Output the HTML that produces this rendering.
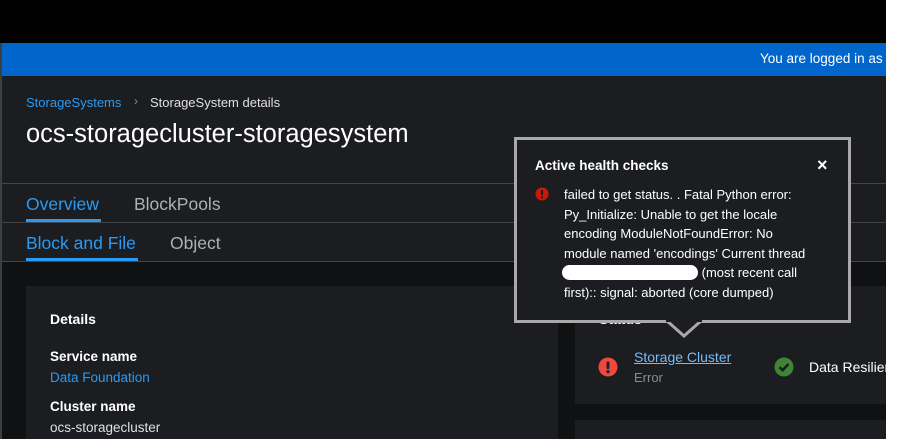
<!DOCTYPE html>
<html><head><meta charset="utf-8"><style>
*{margin:0;padding:0;box-sizing:border-box}
body{width:910px;height:446px;background:#fff;position:relative;overflow:hidden;font-family:"Liberation Sans",sans-serif}
.abs{position:absolute}
</style></head><body>
<div class="abs" style="left:0;top:0;width:886px;height:43px;background:#000"></div>
<div class="abs" style="left:0;top:43px;width:886px;height:33px;background:#0066cc"></div>
<div class="abs" style="left:760px;top:51px;color:#fff;font-size:13.5px;white-space:nowrap">You are logged in as</div>
<div class="abs" style="left:0;top:76px;width:886px;height:186px;background:#1b1d21"></div>
<div class="abs" style="left:0;top:262px;width:886px;height:177px;background:#0f1113"></div>
<div class="abs" style="left:0;top:43px;width:2px;height:396px;background:#3c3f42"></div>
<div class="abs" style="left:26px;top:95px;font-size:13px;color:#2b9af3">StorageSystems</div>
<div class="abs" style="left:134px;top:94px;font-size:12px;color:#8a8d90">›</div>
<div class="abs" style="left:150px;top:95px;font-size:13px;color:#e0e0e0">StorageSystem details</div>
<div class="abs" style="left:26px;top:120px;font-size:25.5px;color:#fff">ocs-storagecluster-storagesystem</div>
<div class="abs" style="left:2px;top:183px;width:884px;height:1px;background:#444548"></div>
<div class="abs" style="left:26px;top:194px;font-size:17.5px;color:#2b9af3">Overview</div>
<div class="abs" style="left:26px;top:219px;width:75px;height:3px;background:#2b9af3"></div>
<div class="abs" style="left:134px;top:194px;font-size:17.5px;color:#aeb0b2">BlockPools</div>
<div class="abs" style="left:2px;top:222px;width:884px;height:1px;background:#444548"></div>
<div class="abs" style="left:26px;top:233px;font-size:17.5px;color:#2b9af3">Block and File</div>
<div class="abs" style="left:26px;top:258px;width:112px;height:3px;background:#2b9af3"></div>
<div class="abs" style="left:170px;top:233px;font-size:17.5px;color:#aeb0b2">Object</div>
<div class="abs" style="left:2px;top:261px;width:884px;height:1px;background:#444548"></div>
<div class="abs" style="left:26px;top:286px;width:532px;height:153px;background:#1b1d21"></div>
<div class="abs" style="left:50px;top:311px;font-size:14px;font-weight:bold;color:#fff">Details</div>
<div class="abs" style="left:50px;top:349px;font-size:13.5px;font-weight:bold;color:#fff">Service name</div>
<div class="abs" style="left:50px;top:370px;font-size:13.5px;color:#2b9af3">Data Foundation</div>
<div class="abs" style="left:50px;top:399px;font-size:13.5px;font-weight:bold;color:#fff">Cluster name</div>
<div class="abs" style="left:50px;top:420px;font-size:13.5px;color:#e0e0e0">ocs-storagecluster</div>
<div class="abs" style="left:575px;top:286px;width:311px;height:118px;background:#1b1d21"></div>
<div class="abs" style="left:575px;top:420px;width:311px;height:19px;background:#1b1d21"></div>
<div class="abs" style="left:599px;top:311px;font-size:14px;font-weight:bold;color:#fff">Status</div>
<svg class="abs" style="left:598px;top:357px" width="20" height="20"><circle cx="10" cy="10" r="9.5" fill="#f0483e"/><rect x="8.6" y="4.5" width="2.8" height="7.5" rx="1" fill="#1b1d21"/><circle cx="10" cy="14.6" r="1.6" fill="#1b1d21"/></svg>
<div class="abs" style="left:634px;top:349px;font-size:14px;color:#73bcf7;text-decoration:underline">Storage Cluster</div>
<div class="abs" style="left:634px;top:370px;font-size:13px;color:#8a8d90">Error</div>
<svg class="abs" style="left:774px;top:357px" width="20" height="20"><circle cx="10" cy="10" r="9.5" fill="#3e8635"/><path d="M5.5 10.2 L8.6 13.2 L14.5 7" stroke="#1b1d21" stroke-width="2.6" fill="none"/></svg>
<div class="abs" style="left:809px;top:359px;font-size:14px;color:#fff;white-space:nowrap;width:77px;overflow:hidden">Data Resilien</div>
<div class="abs" style="left:886px;top:0;width:24px;height:446px;background:#fff"></div>
<div class="abs" style="left:0;top:439px;width:910px;height:7px;background:#fff"></div>
<!-- popover -->
<div class="abs" style="left:514px;top:137px;width:337px;height:186px;background:#1b1d21;border:3px solid #a9a9a9"></div>
<svg class="abs" style="left:666px;top:320px" width="36" height="18"><path d="M0 0 L18 16 L36 0" fill="#1b1d21" stroke="#a9a9a9" stroke-width="3"/><rect x="0" y="0" width="36" height="2" fill="#1b1d21"/></svg>
<div class="abs" style="left:535px;top:158px;font-size:13.5px;font-weight:bold;color:#fff">Active health checks</div>
<div class="abs" style="left:817px;top:155px;font-size:18px;font-weight:bold;color:#fff">×</div>
<svg class="abs" style="left:535px;top:187px" width="14" height="14"><circle cx="7" cy="7" r="6.5" fill="#c9190b"/><rect x="6" y="3" width="2" height="5" fill="#1b1d21"/><circle cx="7" cy="10.3" r="1.1" fill="#1b1d21"/></svg>
<div class="abs" style="left:564px;top:185px;width:280px;font-size:13px;line-height:19.5px;color:#fff;white-space:nowrap">failed to get status. . Fatal Python error:<br>Py_Initialize: Unable to get the locale<br>encoding ModuleNotFoundError: No<br>module named 'encodings' Current thread<br><span style="display:inline-block;width:136px;height:15px;background:#fff;border-radius:8px;vertical-align:-3px;margin-left:-2px"></span> (most recent call<br>first):: signal: aborted (core dumped)</div>
</body></html>
